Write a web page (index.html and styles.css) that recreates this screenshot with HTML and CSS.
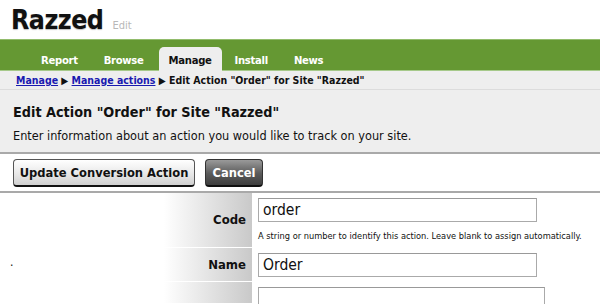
FILE: index.html
```html
<!DOCTYPE html>
<html>
<head>
<meta charset="utf-8">
<link rel="stylesheet" href="styles.css">
</head>
<body>
<header class="site-head">
  <h1 class="site-title">Razzed</h1>
  <a class="site-edit" href="#">Edit</a>
</header>
<nav class="tabs">
  <a class="tab" href="#">Report</a>
  <a class="tab" href="#">Browse</a>
  <a class="tab active" href="#">Manage</a>
  <a class="tab" href="#">Install</a>
  <a class="tab" href="#">News</a>
</nav>
<div class="crumbs">
  <a href="#">Manage</a> <span class="arr">&#9654;</span> <a href="#">Manage actions</a> <span class="arr">&#9654;</span> Edit Action "Order" for Site "Razzed"
</div>
<section class="intro">
  <h2>Edit Action "Order" for Site "Razzed"</h2>
  <p>Enter information about an action you would like to track on your site.</p>
</section>
<div class="actions">
  <button class="btn btn-primary">Update Conversion Action</button>
  <button class="btn btn-dark">Cancel</button>
</div>
<div class="form">
  <div class="row row-code">
    <div class="label">Code</div>
    <div class="field">
      <input class="input" type="text" value="order">
      <div class="hint">A string or number to identify this action. Leave blank to assign automatically.</div>
    </div>
  </div>
  <div class="row row-name">
    <div class="label"><span class="dot">.</span><span>Name</span></div>
    <div class="field">
      <input class="input" type="text" value="Order">
    </div>
  </div>
  <div class="row row-third">
    <div class="label"></div>
    <div class="field">
      <input class="input wide" type="text" value="">
    </div>
  </div>
</div>
</body>
</html>
```
FILE: styles.css
```css
* { box-sizing: border-box; }
html, body { margin: 0; padding: 0; background: #fff; }
body {
  font-family: "DejaVu Sans Condensed", "DejaVu Sans", sans-serif;
  color: #111;
  width: 600px;
  height: 304px;
  overflow: hidden;
}
.site-head {
  height: 39px;
  display: flex;
  align-items: flex-end;
  padding: 0 0 5px 11px;
  gap: 9px;
}
.site-title {
  margin: 0;
  font-size: 26.5px;
  line-height: 28px;
  font-weight: bold;
  letter-spacing: -0.5px;
  color: #111;
  text-shadow: 0 1px 1px rgba(0,0,0,0.25);
}
.site-edit {
  font-size: 11px;
  color: #b8b8b8;
  text-decoration: none;
  line-height: 13px;
  margin-bottom: 2px;
}
.tabs {
  height: 32px;
  background: #659833;
  border-top: 1px solid #92bc6c;
  border-bottom: 1px solid #a6c98a;
  display: flex;
  align-items: flex-end;
  padding-left: 28px;
}
.tab {
  color: #fff;
  font-weight: bold;
  font-size: 11.2px;
  letter-spacing: -0.3px;
  text-decoration: none;
  padding: 0 13px 1px;
  line-height: 16px;
  height: 23px;
  display: flex;
  align-items: flex-end;
}
.tab.active {
  background: #eeeeee;
  color: #111;
  border-radius: 5px 5px 0 0;
  height: 24px;
  padding: 0 10px 2px;
  margin: 0 0 -1px 2px;
}
.crumbs {
  height: 19px;
  background: #eeeeee;
  border-bottom: 1px solid #dcdcdc;
  font-size: 10.5px;
  font-weight: bold;
  padding: 2px 0 0 16px;
  line-height: 14px;
  color: #111;
  white-space: nowrap;
}
.crumbs a { color: #1a1ab0; text-decoration: underline; }
.crumbs .arr { font-size: 10px; }
.intro {
  background: #eeeeee;
  height: 64px;
  padding: 13px 13px 0;
  border-bottom: 2px solid #a9a9a9;
}
.intro h2 {
  margin: 0;
  font-size: 14.3px;
  line-height: 18px;
  font-weight: bold;
  color: #111;
}
.intro p {
  margin: 7px 0 0;
  font-size: 12.6px;
  line-height: 16px;
  color: #111;
}
.actions {
  height: 39px;
  display: flex;
  gap: 10px;
  padding: 5px 0 0 13px;
  border-bottom: 2px solid #a9a9a9;
}
.btn {
  height: 28px;
  font-family: inherit;
  font-weight: bold;
  font-size: 12.8px;
  border-radius: 4px;
  padding: 0;
  white-space: nowrap;
  cursor: pointer;
}
.btn-primary {
  width: 182px;
  background: linear-gradient(#ffffff, #e6e6e6 60%, #d0d0d0);
  border: 1px solid #555;
  border-bottom: 2px solid #111;
  color: #111;
}
.btn-dark {
  width: 58px;
  background: linear-gradient(#9a9a9a, #5a5a5a 55%, #3e3e3e);
  border: 1px solid #333;
  border-bottom: 2px solid #111;
  color: #fff;
}
.form { display: flex; flex-direction: column; }
.row {
  display: flex;
  border-bottom: 1px solid #fff;
}
.label {
  width: 252px;
  flex: none;
  background: linear-gradient(to right, #ffffff 0, #ffffff 65%, #c9c9c9 100%);
  text-align: right;
  font-weight: bold;
  font-size: 13px;
  padding-right: 6px;
  color: #111;
  display: flex;
  justify-content: space-between;
}
.row-code { height: 55px; }
.row-code .label { padding-top: 19px; justify-content: flex-end; }
.row-name { height: 34px; }
.row-name .label { align-items: center; padding-left: 10px; padding-bottom: 1px; }
.row-third { height: 21px; border-bottom: 0; }
.dot { font-weight: normal; font-size: 12px; position: relative; top: -2px; }
.field { padding: 5px 0 0 6px; }
.input {
  width: 279px;
  height: 24px;
  border: 1px solid #aaa;
  border-top-color: #999;
  font-family: inherit;
  font-size: 15.5px;
  padding: 0 4px;
  color: #111;
  outline: none;
}
.input.wide { width: 287px; }
.hint {
  font-size: 9.2px;
  line-height: 11px;
  margin-top: 8px;
  color: #111;
  white-space: nowrap;
}
```
